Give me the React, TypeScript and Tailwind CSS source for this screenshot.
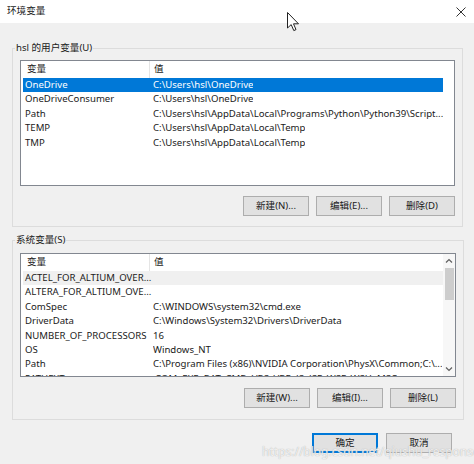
import React from "react";

const uiFont = {
  fontFamily: '"Noto Sans", "Noto Sans CJK SC", sans-serif',
};

type Row = { name: string; value: string };

const userVars: Row[] = [
  { name: "OneDrive", value: "C:\\Users\\hsl\\OneDrive" },
  { name: "OneDriveConsumer", value: "C:\\Users\\hsl\\OneDrive" },
  {
    name: "Path",
    value: "C:\\Users\\hsl\\AppData\\Local\\Programs\\Python\\Python39\\Script...",
  },
  { name: "TEMP", value: "C:\\Users\\hsl\\AppData\\Local\\Temp" },
  { name: "TMP", value: "C:\\Users\\hsl\\AppData\\Local\\Temp" },
];

const systemVars: Row[] = [
  { name: "ACTEL_FOR_ALTIUM_OVER...", value: "" },
  { name: "ALTERA_FOR_ALTIUM_OVE...", value: "" },
  { name: "ComSpec", value: "C:\\WINDOWS\\system32\\cmd.exe" },
  { name: "DriverData", value: "C:\\Windows\\System32\\Drivers\\DriverData" },
  { name: "NUMBER_OF_PROCESSORS", value: "16" },
  { name: "OS", value: "Windows_NT" },
  {
    name: "Path",
    value: "C:\\Program Files (x86)\\NVIDIA Corporation\\PhysX\\Common;C:\\...",
  },
  { name: "PATHEXT", value: ".COM;.EXE;.BAT;.CMD;.VBS;.VBE;.JS;.JSE;.WSF;.WSH;.MSC" },
];

function Button({
  children,
  primary,
}: {
  children: React.ReactNode;
  primary?: boolean;
}) {
  return (
    <button
      className={
        primary
          ? "flex h-[20px] w-[66px] items-center justify-center border-2 border-[#0078d7] bg-[#e1e1e1] text-[9.6px] text-[#1a1a1a]"
          : "flex h-[20px] w-[66px] items-center justify-center border border-[#adadad] bg-[#e1e1e1] text-[9.6px] text-[#1a1a1a]"
      }
    >
      {children}
    </button>
  );
}

function VarRow({ row, state }: { row: Row; state?: "active" | "hover" }) {
  const bg =
    state === "active"
      ? "bg-[#0078d7] text-white"
      : state === "hover"
        ? "bg-[#f0f0f0] text-[#1a1a1a]"
        : "text-[#1a1a1a]";
  return (
    <div className={`flex h-[14.4px] w-[420px] items-center whitespace-nowrap ${bg}`}>
      <span className="w-[130px] shrink-0 overflow-hidden pl-[2px]">{row.name}</span>
      <span className="overflow-hidden">{row.value}</span>
    </div>
  );
}

function ListHeader() {
  return (
    <div className="flex h-[17px] items-center text-[#1a1a1a]">
      <span className="flex h-full w-[127px] shrink-0 items-center border-r border-[#e5e5e5] pl-[4px]">
        变量
      </span>
      <span className="pl-[4px]">值</span>
    </div>
  );
}

function ScrollBar() {
  return (
    <div className="flex w-[12px] shrink-0 flex-col items-center bg-[#f7f7f7]">
      <svg width="8" height="12" viewBox="0 0 8 12" className="mt-[1px]">
        <path d="M1 7.5 L4 4.5 L7 7.5" fill="none" stroke="#606060" strokeWidth="1.2" />
      </svg>
      <div className="mt-[1px] h-[32px] w-[9px] bg-[#cdcdcd]" />
      <div className="flex-1" />
      <svg width="8" height="12" viewBox="0 0 8 12" className="mb-[1px]">
        <path d="M1 4.5 L4 7.5 L7 4.5" fill="none" stroke="#606060" strokeWidth="1.2" />
      </svg>
    </div>
  );
}

function Group({
  title,
  children,
  className,
}: {
  title: string;
  children: React.ReactNode;
  className?: string;
}) {
  return (
    <fieldset className={`border border-[#dcdcdc] px-[7px] ${className ?? ""}`}>
      <legend className="ml-[-5px] h-[16px] px-[1px] text-[9.6px] leading-[16px] text-[#1a1a1a]">
        {title}
      </legend>
      {children}
    </fieldset>
  );
}

function Cursor() {
  return (
    <svg
      width="14"
      height="21"
      viewBox="0 0 14 21"
      className="absolute left-[287px] top-[12px]"
    >
      <path
        d="M0.5 0.5 L0.5 16 L4.2 12.6 L6.8 18.6 L9 17.6 L6.5 11.8 L11.5 11.8 Z"
        fill="white"
        stroke="#222"
        strokeWidth="1"
        strokeLinejoin="round"
      />
    </svg>
  );
}

export default function App() {
  return (
    <div
      className="relative h-[464px] w-[474px] overflow-hidden bg-[#f0f0f0] text-[9.6px]"
      style={uiFont}
    >
      {/* title bar */}
      <div className="flex h-[23px] items-center justify-between bg-white pl-[7px] pr-[8px]">
        <span className="text-[9.6px] text-[#1a1a1a]">环境变量</span>
        <svg width="10" height="10" viewBox="0 0 10 10">
          <path d="M0.5 0.5 L9.5 9.5 M9.5 0.5 L0.5 9.5" stroke="#333" strokeWidth="1" />
        </svg>
      </div>
      <Cursor />

      <div className="pl-[12px] pr-[11px] pt-[17px]">
        <Group title="hsl 的用户变量(U)" className="pb-[10px]">
          <div className="mt-[4px] h-[126px] border border-[#828790] bg-white pl-[2px]">
            <ListHeader />
            <VarRow row={userVars[0]} state="active" />
            {userVars.slice(1).map((r) => (
              <VarRow key={r.name + r.value} row={r} />
            ))}
          </div>
          <div className="mt-[10px] flex justify-end gap-[7px]">
            <Button>新建(N)...</Button>
            <Button>编辑(E)...</Button>
            <Button>删除(D)</Button>
          </div>
        </Group>

        <Group title="系统变量(S)" className="mt-[5px] pb-[11px]">
          <div className="mt-[5px] flex h-[124px] border border-[#828790] bg-white pl-[2px]">
            <div className="min-w-0 flex-1 overflow-hidden">
              <ListHeader />
              <VarRow row={systemVars[0]} state="hover" />
              {systemVars.slice(1).map((r) => (
                <VarRow key={r.name} row={r} />
              ))}
            </div>
            <ScrollBar />
          </div>
          <div className="mt-[11px] flex justify-end gap-[7px]">
            <Button>新建(W)...</Button>
            <Button>编辑(I)...</Button>
            <Button>删除(L)</Button>
          </div>
        </Group>

        <div className="mt-[13px] flex justify-end gap-[8px] pr-[11px]">
          <Button primary>确定</Button>
          <Button>取消</Button>
        </div>
      </div>

      {/* blog watermark */}
      <div className="absolute left-[262px] top-[443px] whitespace-nowrap text-[12px] text-white/80 [text-shadow:0_0_1px_#9a9a9a]">
        https://blog.csdn.net/qiushu_response
      </div>
    </div>
  );
}
